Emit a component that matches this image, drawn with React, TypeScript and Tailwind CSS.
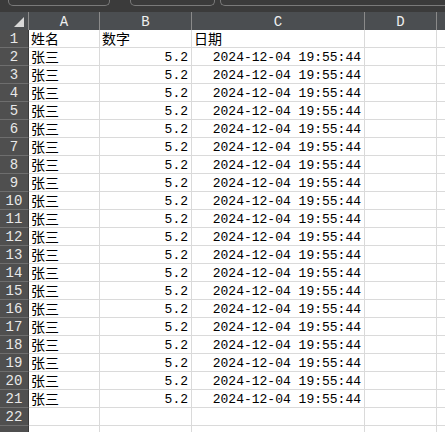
const cols = [
  { key: "A", w: "w-[71px]" },
  { key: "B", w: "w-[92px]" },
  { key: "C", w: "w-[173px]" },
  { key: "D", w: "w-[72px]" },
];

const rows = Array.from({ length: 20 }, () => ({
  name: "张三",
  num: "5.2",
  date: "2024-12-04 19:55:44",
}));

const cjk = { fontFamily: '"Noto Sans CJK SC", "Liberation Sans", sans-serif' };
const mono = { fontFamily: '"Liberation Mono", "Noto Sans CJK SC", monospace' };

function RowHead({ n }: { n?: number }) {
  return (
    <div
      className="w-[29px] shrink-0 h-full flex items-center justify-center bg-[#4f4f4f] text-[#e8e8e8] text-[14px] leading-none border-b border-[#6e6e6e] border-r border-r-[#3a3a3a] overflow-hidden"
      style={mono}
    >
      {n}
    </div>
  );
}

function Row({ n, cells }: { n?: number; cells: [string, string, string] }) {
  const head = n === 1;
  return (
    <div className="flex h-[18px] bg-white">
      <RowHead n={n} />
      <div className="w-[71px] shrink-0 h-full overflow-hidden border-r border-b border-[#dadada] pl-[2px] text-[14px] leading-[17px] text-black" style={cjk}>
        {cells[0]}
      </div>
      <div
        className={`w-[92px] shrink-0 h-full overflow-hidden border-r border-b border-[#dadada] text-black ${head ? "pl-[2px] text-left text-[14px] leading-[17px]" : "pr-[3px] text-right text-[13px] leading-[19px]"}`}
        style={head ? cjk : mono}
      >
        {cells[1]}
      </div>
      <div
        className={`w-[173px] shrink-0 h-full overflow-hidden border-r border-b border-[#dadada] text-black ${head ? "pl-[2px] text-left text-[14px] leading-[17px]" : "pr-[3px] text-right text-[13px] leading-[19px]"}`}
        style={head ? cjk : mono}
      >
        {cells[2]}
      </div>
      <div className="w-[72px] shrink-0 border-r border-b border-[#dadada]" />
      <div className="flex-1 border-b border-[#dadada]" />
    </div>
  );
}

export default function App() {
  return (
    <div className="w-[445px] h-[432px] overflow-hidden bg-white">
      <div className="h-[12px] bg-[#3b3b3b] flex items-end pb-[6px] overflow-hidden">
        <div className="ml-[8px] w-[102px] h-[14px] shrink-0 rounded-b-[5px] border border-t-0 border-[#7a7a7a]" />
        <div className="ml-[20px] w-[85px] h-[14px] shrink-0 rounded-b-[5px] border border-t-0 border-[#7a7a7a]" />
        <div className="ml-[5px] w-[240px] h-[14px] shrink-0 rounded-bl-[5px] border border-t-0 border-r-0 border-[#7a7a7a]" />
      </div>
      <div className="flex h-[18px] bg-[#4b4e51] text-[#f0f0f0] text-[14px]" style={mono}>
        <div className="w-[29px] shrink-0 border-r border-[#8a8a8a] flex items-end justify-end pr-[4px] pb-[3px]">
          <svg width="10" height="10" viewBox="0 0 10 10">
            <polygon points="10,0 10,10 0,10" fill="#d8d8d8" />
          </svg>
        </div>
        {cols.map((c) => (
          <div key={c.key} className={`${c.w} shrink-0 border-r border-[#8a8a8a] flex items-center justify-center leading-none pt-[2px]`}>
            {c.key}
          </div>
        ))}
        <div className="flex-1" />
      </div>
      <Row n={1} cells={["姓名", "数字", "日期"]} />
      {rows.map((r, i) => (
        <Row key={i} n={i + 2} cells={[r.name, r.num, r.date]} />
      ))}
      <Row n={22} cells={["", "", ""]} />
      <Row cells={["", "", ""]} />
    </div>
  );
}
